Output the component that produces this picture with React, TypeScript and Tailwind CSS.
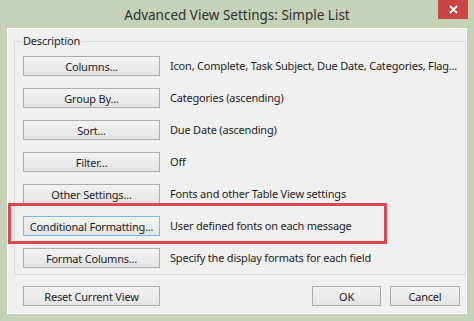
import React from "react";

const rows = [
  { label: "Columns...", desc: "Icon, Complete, Task Subject, Due Date, Categories, Flag..." },
  { label: "Group By...", desc: "Categories (ascending)" },
  { label: "Sort...", desc: "Due Date (ascending)" },
  { label: "Filter...", desc: "Off" },
  { label: "Other Settings...", desc: "Fonts and other Table View settings" },
  { label: "Conditional Formatting...", desc: "User defined fonts on each message", focused: true },
  { label: "Format Columns...", desc: "Specify the display formats for each field" },
];

const Btn = ({ children, className = "", focused = false }: { children: React.ReactNode; className?: string; focused?: boolean }) => (
  <button
    className={
      "h-[20px] flex items-center justify-center whitespace-nowrap text-[11px] tracking-[-0.2px] leading-none text-[#1e1e1e] bg-gradient-to-b from-[#f3f3f3] to-[#e4e4e4] border " +
      (focused ? "border-[#7fb2e6] " : "border-[#acacac] ") +
      className
    }
  >
    {children}
  </button>
);

export default function App() {
  return (
    <div className="w-[474px] h-[321px] bg-[#c6d2b8] font-['Noto_Sans',sans-serif] relative overflow-hidden">
      {/* title bar */}
      <div className="h-[28px] flex items-center justify-center text-[13.5px] text-[#2f2f2f] pt-[2px]">
        Advanced View Settings: Simple List
      </div>
      <div className="absolute top-0 right-[6px] w-[30px] h-[19px] bg-[#cc4444] flex items-center justify-center">
        <svg width="9" height="9" viewBox="0 0 9 9">
          <path d="M1 1 L8 8 M8 1 L1 8" stroke="#fff" strokeWidth="1.8" />
        </svg>
      </div>

      {/* dialog body */}
      <div className="mx-[7px] h-[286px] bg-[#f0f0f0] border border-white">
        <fieldset className="mt-[4px] ml-[6px] mr-[6px] border border-[#dcdcdc] pl-[8px] pr-[8px] pb-[6px]">
          <legend className="text-[11px] tracking-[-0.2px] text-[#1e1e1e] px-[1px] -ml-[1px] leading-[16px]">Description</legend>
          <div className="flex flex-col gap-[12px] mt-[7px]">
            {rows.map((r) => (
              <div key={r.label} className="flex items-center gap-[10px]">
                <Btn className="w-[137px] shrink-0" focused={r.focused}>
                  {r.label}
                </Btn>
                <span className="text-[11px] tracking-[-0.2px] text-[#1e1e1e] whitespace-nowrap">{r.desc}</span>
              </div>
            ))}
          </div>
        </fieldset>

        <div className="flex items-center mt-[11px] pl-[15px] pr-[6px]">
          <Btn className="w-[137px]">Reset Current View</Btn>
          <div className="ml-auto flex gap-[9px]">
            <Btn className="w-[69px]">OK</Btn>
            <Btn className="w-[70px]">Cancel</Btn>
          </div>
        </div>
      </div>

      {/* red highlight annotation */}
      <div className="absolute left-[8px] top-[203px] w-[379px] h-[41px] border-[3px] border-[#e0474c] pointer-events-none" />
    </div>
  );
}
